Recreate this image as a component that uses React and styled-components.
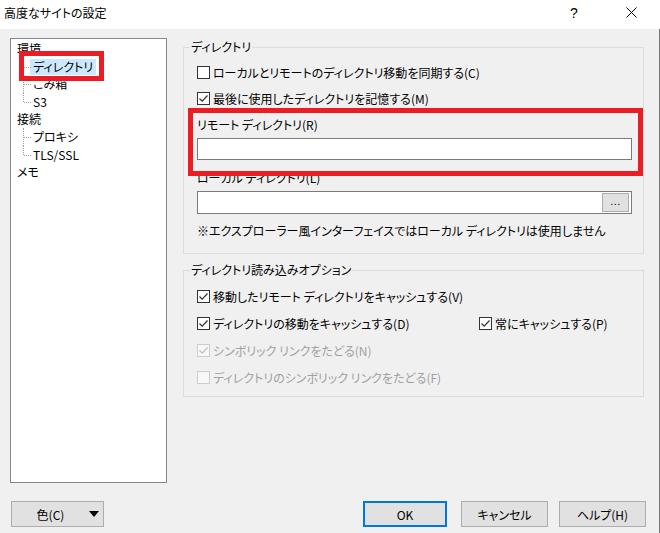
import React from 'react';
import styled, { createGlobalStyle } from 'styled-components';

const Global = createGlobalStyle`
  html, body {
    margin: 0;
    padding: 0;
    background: #fff;
  }
  body {
    font-family: "Noto Sans CJK JP", "Noto Sans", sans-serif;
    font-size: 12px;
    color: #000;
    font-feature-settings: "palt";
  }
  * {
    box-sizing: border-box;
  }
`;

const Window = styled.div`
  position: relative;
  width: 660px;
  height: 533px;
  display: flex;
  flex-direction: column;
  overflow: hidden;
`;

const TitleBar = styled.div`
  height: 29px;
  flex: none;
  display: flex;
  align-items: center;
  padding: 0 6px 0 4px;
  background: #fff;
  font-size: 12px;
`;

const Title = styled.div`
  flex: 1;
  line-height: 16px;
  margin-top: -4px;
`;

const Caption = styled.div`
  width: ${p => p.w}px;
  height: 29px;
  display: flex;
  align-items: center;
  justify-content: center;
  font-family: "Liberation Sans", sans-serif;
  font-size: 14px;
  margin-top: -4px;
`;

const Body = styled.div`
  flex: 1;
  display: flex;
  flex-direction: column;
  background: #f0f0f0;
  border-right: 1px solid #7a7a7a;
  padding: 9px 0 0 10px;
`;

const Main = styled.div`
  display: flex;
  align-items: flex-start;
`;

const Tree = styled.ul`
  list-style: none;
  margin: 0;
  width: 157px;
  height: 445px;
  padding: 1px 0 0 0;
  background: #fff;
  border: 1px solid #828790;
`;

const Node = styled.li`
  margin: 0;
  padding: 0;
`;

const NodeLabel = styled.div`
  height: 17.6px;
  line-height: 17.6px;
  padding-left: 6px;
  white-space: nowrap;
`;

const Children = styled.ul`
  list-style: none;
  margin: 0;
  padding: 0;
`;

const Child = styled.li`
  position: relative;
  height: 17.6px;
  line-height: 17.6px;
  padding-left: 19px;
  white-space: nowrap;
  &::before {
    content: '';
    position: absolute;
    left: 12px;
    top: 0;
    height: ${p => (p.last ? '9px' : '100%')};
    border-left: 1px dotted #a0a0a0;
  }
  &::after {
    content: '';
    position: absolute;
    left: 13px;
    top: 9px;
    width: 7px;
    border-top: 1px dotted #a0a0a0;
  }
`;

const ChildText = styled.span`
  display: inline-block;
  height: 16px;
  line-height: 16px;
  padding: 0 3px;
  background: ${p => (p.selected ? '#cce8ff' : 'transparent')};
`;

const Right = styled.div`
  margin-left: 16px;
  width: 461px;
  display: flex;
  flex-direction: column;
`;

const Group = styled.fieldset`
  margin: ${p => p.top}px 0 0 0;
  min-width: 0;
  padding: 0 11px ${p => p.bottom}px 13px;
  border: 1px solid #dcdcdc;
  display: flex;
  flex-direction: column;
`;

const Legend = styled.legend`
  padding: 0 1px;
  margin-left: -7px;
  line-height: 16px;
`;

const GroupSpace = styled.div`
  height: ${p => p.h}px;
`;

const CheckRow = styled.label`
  height: ${p => p.h}px;
  display: flex;
  align-items: center;
  gap: 3px;
  color: ${p => (p.disabled ? '#a0a0a0' : '#000')};
  white-space: nowrap;
`;

const CheckGrid = styled.div`
  display: grid;
  grid-template-columns: 282px auto;
`;

const Box = styled.span`
  width: 13px;
  height: 13px;
  flex: none;
  display: flex;
  align-items: center;
  justify-content: center;
  background: ${p => (p.disabled ? '#f7f7f7' : '#fff')};
  border: 1px solid ${p => (p.disabled ? '#cccccc' : '#333')};
`;

const FieldLabel = styled.div`
  margin-top: ${p => p.top}px;
  line-height: 16px;
`;

const TextBox = styled.div`
  margin-top: 5px;
  height: ${p => p.h}px;
  display: flex;
  align-items: center;
  justify-content: flex-end;
  background: #fff;
  border: 1px solid #7a7a7a;
  padding-right: 2px;
`;

const Browse = styled.div`
  width: 27px;
  height: 19px;
  display: flex;
  align-items: center;
  justify-content: center;
  background: #e1e1e1;
  border: 1px solid #adadad;
  font-family: "Liberation Sans", sans-serif;
  font-size: 11px;
  letter-spacing: 0.5px;
  padding-bottom: 3px;
`;

const Note = styled.div`
  margin-top: 9px;
  line-height: 16px;
  white-space: nowrap;
`;

const Footer = styled.div`
  display: flex;
  align-items: center;
  margin-top: 18px;
  padding: 0 13px 0 1px;
`;

const Button = styled.div`
  width: ${p => p.w}px;
  height: 26px;
  margin-left: ${p => p.gap || 0}px;
  display: flex;
  align-items: center;
  justify-content: center;
  background: #e1e1e1;
  border: 1px solid ${p => (p.primary ? '#0078d7' : '#adadad')};
  box-shadow: ${p => (p.primary ? 'inset 0 0 0 1px #0078d7' : 'none')};
  white-space: nowrap;
`;

const SplitButton = styled(Button)`
  justify-content: flex-start;
`;

const SplitText = styled.span`
  width: 77px;
  text-align: center;
`;

const Spacer = styled.div`
  flex: 1;
`;

const Mark = styled.div`
  position: absolute;
  left: ${p => p.x}px;
  top: ${p => p.y}px;
  width: ${p => p.w}px;
  height: ${p => p.h}px;
  border: 5px solid #ea1d25;
  pointer-events: none;
`;

const Check = ({ checked, disabled }) => (
  <Box disabled={disabled}>
    {checked && (
      <svg width="11" height="11" viewBox="0 0 11 11">
        <path d="M1.5 5.5 L4.2 8.2 L9.5 2.5" fill="none" stroke={disabled ? '#bfbfbf' : '#333'} strokeWidth="1.2" />
      </svg>
    )}
  </Box>
);

const CheckItem = ({ checked, disabled, h = 26, children }) => (
  <CheckRow h={h} disabled={disabled}>
    <Check checked={checked} disabled={disabled} />
    <span>{children}</span>
  </CheckRow>
);

export default function App() {
  return (
    <Window>
      <Global />
      <TitleBar>
        <Title>高度なサイトの設定</Title>
        <Caption w={46}>?</Caption>
        <Caption w={11} />
        <Caption w={46}>
          <svg width="11" height="11" viewBox="0 0 11 11">
            <path d="M0.5 0.5 L10.5 10.5 M10.5 0.5 L0.5 10.5" stroke="#000" strokeWidth="1" />
          </svg>
        </Caption>
      </TitleBar>
      <Body>
        <Main>
          <Tree>
            <Node>
              <NodeLabel>環境</NodeLabel>
              <Children>
                <Child><ChildText selected>ディレクトリ</ChildText></Child>
                <Child><ChildText>ごみ箱</ChildText></Child>
                <Child last><ChildText>S3</ChildText></Child>
              </Children>
            </Node>
            <Node>
              <NodeLabel>接続</NodeLabel>
              <Children>
                <Child><ChildText>プロキシ</ChildText></Child>
                <Child last><ChildText>TLS/SSL</ChildText></Child>
              </Children>
            </Node>
            <Node>
              <NodeLabel>メモ</NodeLabel>
            </Node>
          </Tree>
          <Right>
            <Group top={1} bottom={14}>
              <Legend>ディレクトリ</Legend>
              <GroupSpace h={4} />
              <CheckItem>ローカルとリモートのディレクトリ移動を同期する(C)</CheckItem>
              <CheckItem checked>最後に使用したディレクトリを記憶する(M)</CheckItem>
              <FieldLabel top={6}>リモート ディレクトリ(R)</FieldLabel>
              <TextBox h={22} />
              <FieldLabel top={10}>ローカル ディレクトリ(L)</FieldLabel>
              <TextBox h={23}>
                <Browse>...</Browse>
              </TextBox>
              <Note>※エクスプローラー風インターフェイスではローカル ディレクトリは使用しません</Note>
            </Group>
            <Group top={8} bottom={5}>
              <Legend>ディレクトリ読み込みオプション</Legend>
              <GroupSpace h={5} />
              <CheckItem checked h={27}>移動したリモート ディレクトリをキャッシュする(V)</CheckItem>
              <CheckGrid>
                <CheckItem checked h={27}>ディレクトリの移動をキャッシュする(D)</CheckItem>
                <CheckItem checked h={27}>常にキャッシュする(P)</CheckItem>
              </CheckGrid>
              <CheckItem checked disabled h={27}>シンボリック リンクをたどる(N)</CheckItem>
              <CheckItem disabled h={27}>ディレクトリのシンボリック リンクをたどる(F)</CheckItem>
            </Group>
          </Right>
        </Main>
        <Footer>
          <SplitButton w={93}>
            <SplitText>色(C)</SplitText>
            <svg width="10" height="6" viewBox="0 0 10 6">
              <path d="M0 0 L10 0 L5 6 Z" fill="#000" />
            </svg>
          </SplitButton>
          <Spacer />
          <Button w={84} primary>OK</Button>
          <Button w={87} gap={14}>キャンセル</Button>
          <Button w={87} gap={11}>ヘルプ(H)</Button>
        </Footer>
      </Body>
      <Mark x={19} y={51} w={85} h={30} />
      <Mark x={188} y={108} w={455} h={68} />
    </Window>
  );
}
